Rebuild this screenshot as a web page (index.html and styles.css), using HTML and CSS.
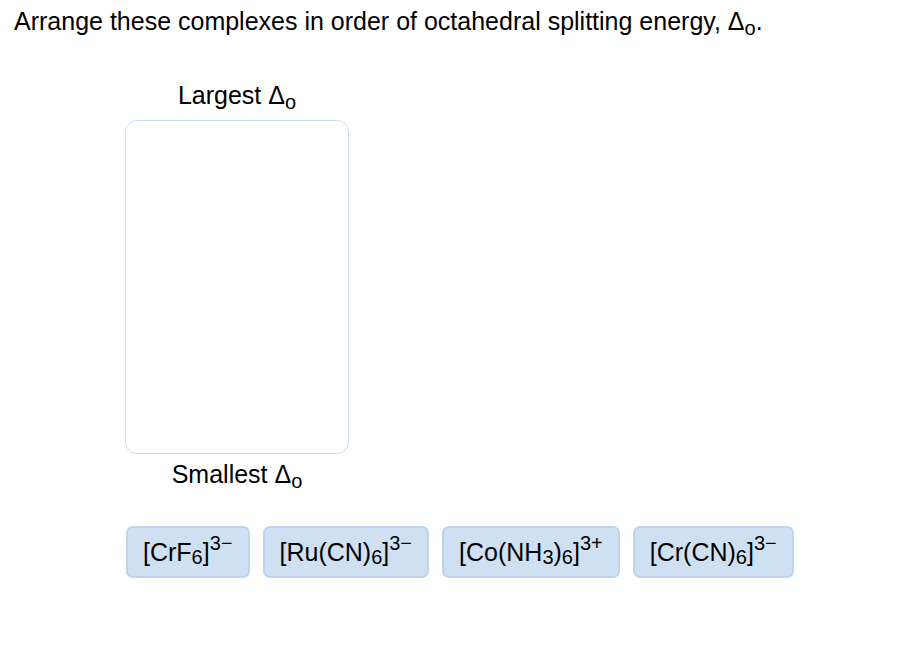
FILE: index.html
```html
<!DOCTYPE html>
<html lang="en">
<head>
    <meta charset="UTF-8">
    <title>Octahedral Splitting</title>
    <link rel="stylesheet" href="styles.css">
</head>
<body>
    <p class="question">Arrange these complexes in order of octahedral splitting energy, &Delta;<sub>o</sub>.</p>

    <!-- Ranking target -->
    <div class="ranking">
        <div class="rank-label">Largest &Delta;<sub>o</sub></div>
        <div class="drop-box"></div>
        <div class="rank-label">Smallest &Delta;<sub>o</sub></div>
    </div>

    <!-- Draggable complexes -->
    <div class="chips">
        <div class="chip">[CrF<sub>6</sub>]<sup>3&minus;</sup></div>
        <div class="chip">[Ru(CN)<sub>6</sub>]<sup>3&minus;</sup></div>
        <div class="chip">[Co(NH<sub>3</sub>)<sub>6</sub>]<sup>3+</sup></div>
        <div class="chip">[Cr(CN)<sub>6</sub>]<sup>3&minus;</sup></div>
    </div>
</body>
</html>
```

FILE: styles.css
```css
* {
    margin: 0;
    padding: 0;
    box-sizing: border-box;
}

body {
    font-family: "Liberation Sans", Arial, sans-serif;
    font-size: 25px;
    color: #000;
    background: #fff;
}

sub, sup {
    font-size: 0.8em;
    line-height: 0;
    position: relative;
    vertical-align: baseline;
}

sub {
    top: 0.26em;
}

sup {
    top: -0.45em;
}

.question {
    padding: 7px 0 0 14px;
    line-height: 28px;
}

.ranking {
    width: 224px;
    margin: 46px 0 0 125px;
    display: flex;
    flex-direction: column;
    align-items: center;
}

.rank-label {
    line-height: 28px;
}

.drop-box {
    width: 224px;
    height: 334px;
    margin: 11px 0 6px;
    border: 1px solid #c9ddf2;
    border-radius: 12px;
}

.chips {
    display: flex;
    gap: 13px;
    margin: 38px 0 0 126px;
}

.chip {
    height: 52px;
    padding: 0 15px;
    display: flex;
    align-items: center;
    background: #cfe0f2;
    border: 2px solid #bcd5ef;
    border-radius: 7px;
}
```
